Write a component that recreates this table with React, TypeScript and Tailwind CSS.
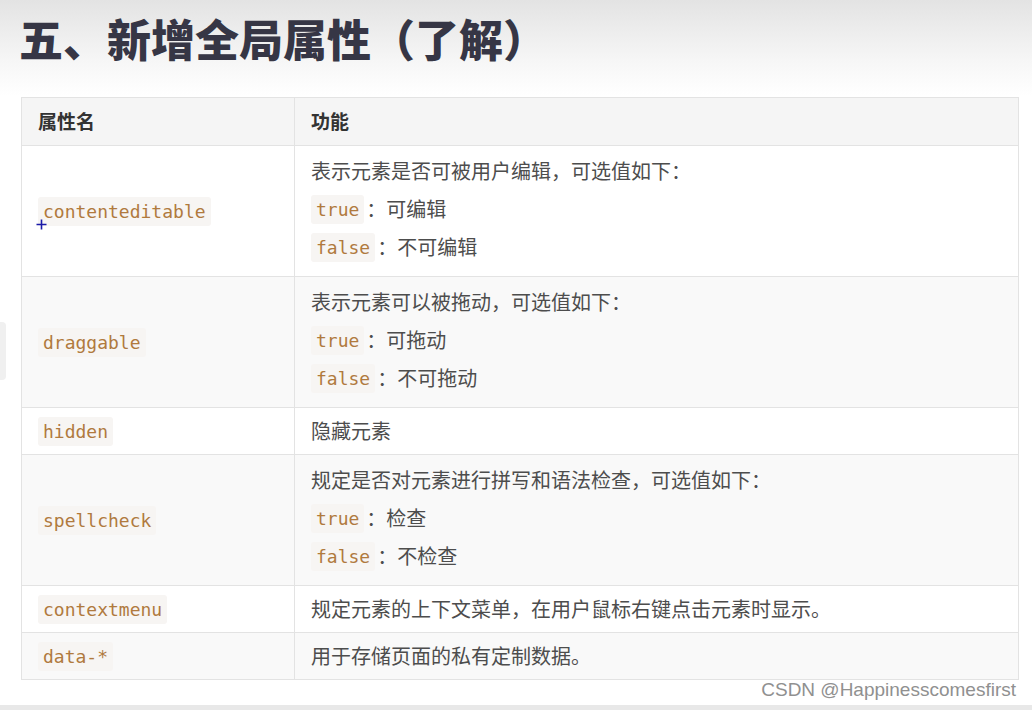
import React from 'react';

const CJK = "font-['Noto_Sans_CJK_SC',sans-serif]";

function Code({ children }: { children: React.ReactNode }) {
  return (
    <span className="inline-block rounded-[3px] bg-[#f7f5f3] px-[5px] font-['DejaVu_Sans_Mono',monospace] text-[18px] leading-[29px] text-[#b07a3e]">
      {children}
    </span>
  );
}

type Row = {
  name: string;
  desc: string;
  options?: [string, string][];
};

const rows: Row[] = [
  {
    name: 'contenteditable',
    desc: '表示元素是否可被用户编辑，可选值如下：',
    options: [
      ['true', '可编辑'],
      ['false', '不可编辑'],
    ],
  },
  {
    name: 'draggable',
    desc: '表示元素可以被拖动，可选值如下：',
    options: [
      ['true', '可拖动'],
      ['false', '不可拖动'],
    ],
  },
  { name: 'hidden', desc: '隐藏元素' },
  {
    name: 'spellcheck',
    desc: '规定是否对元素进行拼写和语法检查，可选值如下：',
    options: [
      ['true', '检查'],
      ['false', '不检查'],
    ],
  },
  { name: 'contextmenu', desc: '规定元素的上下文菜单，在用户鼠标右键点击元素时显示。' },
  { name: 'data-*', desc: '用于存储页面的私有定制数据。' },
];

function TableRow({ row, shaded }: { row: Row; shaded: boolean }) {
  const tall = !!row.options;
  return (
    <div
      className={`grid grid-cols-[273px_1fr] border-t border-[#e3e3e3] ${
        shaded ? 'bg-[#f9f9f9]' : 'bg-white'
      } ${tall ? 'h-[131px]' : 'h-[47px]'}`}
    >
      <div className="flex items-center border-r border-[#e3e3e3] pl-[16px]">
        <Code>{row.name}</Code>
      </div>
      {tall ? (
        <div className="flex flex-col pl-[16px] pt-[6px] text-[20px] text-[#4d4d4d]">
          <div className="flex h-[38px] items-center">{row.desc}</div>
          {row.options!.map(([k, v]) => (
            <div key={k} className="flex h-[38px] items-center">
              <Code>{k}</Code>
              <span className="ml-[2px]">：{v}</span>
            </div>
          ))}
        </div>
      ) : (
        <div className="flex items-center pl-[16px] text-[20px] text-[#4d4d4d]">{row.desc}</div>
      )}
    </div>
  );
}

export default function App() {
  return (
    <div
      className={`relative h-[710px] w-[1032px] overflow-hidden bg-[linear-gradient(to_bottom,#e3e3e3_0px,#f6f6f6_60px,#ffffff_96px)] ${CJK}`}
    >
      <h1 className="h-[97px] pl-[19px] pt-[13px] text-[44px] font-black leading-[50px] text-[#363645]">
        五、新增全局属性（了解）
      </h1>

      <div className="ml-[21px] w-[998px] border border-t-0 border-[#e3e3e3]">
        <div className="grid h-[48px] grid-cols-[273px_1fr] border-t border-[#e3e3e3] bg-[#f5f5f5] text-[19px] font-bold text-[#333333]">
          <div className="flex items-center border-r border-[#e3e3e3] pl-[16px]">属性名</div>
          <div className="flex items-center pl-[16px]">功能</div>
        </div>
        {rows.map((r, i) => (
          <TableRow key={r.name} row={r} shaded={i % 2 === 1} />
        ))}
      </div>

      {/* left edge tab */}
      <div className="absolute left-[-4px] top-[322px] h-[58px] w-[10px] rounded-[4px] bg-[#f0f0f0]" />

      {/* cursor */}
      <svg className="absolute left-[36px] top-[219px]" width="11" height="11" viewBox="0 0 11 11">
        <path d="M5.5 0.5v10M0.5 5.5h10" stroke="#1a1aa8" strokeWidth="1.6" />
      </svg>

      <div className="absolute right-[16px] top-[679px] font-['Liberation_Sans',sans-serif] text-[19px] leading-[22px] text-[#909090]">
        CSDN @Happinesscomesfirst
      </div>

      <div className="absolute bottom-0 left-0 h-[5px] w-full bg-[#e8e8e8]" />
    </div>
  );
}
